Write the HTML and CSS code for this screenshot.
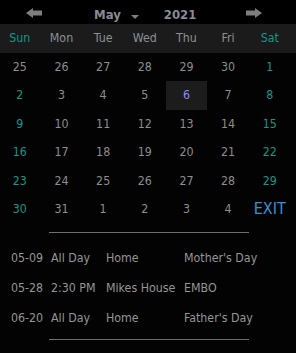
FILE: index.html
```html
<!DOCTYPE html>
<html>
<head>
<meta charset="utf-8">
<link rel="stylesheet" href="styles.css">
</head>
<body>
<div class="app">
  <div class="header">
    <svg class="arrow arrow-left" width="16" height="10" viewBox="0 0 16 10"><path d="M0 5 L7 0 L7 2.5 L16 2.5 L16 7.5 L7 7.5 L7 10 Z" fill="#7e7e7e"/></svg>
    <span class="month">May</span>
    <svg class="caret" width="8" height="4" viewBox="0 0 8 4"><path d="M0 0 L8 0 L4 4 Z" fill="#7e7e7e"/></svg>
    <span class="year">2021</span>
    <svg class="arrow arrow-right" width="16" height="10" viewBox="0 0 16 10"><path d="M16 5 L9 0 L9 2.5 L0 2.5 L0 7.5 L9 7.5 L9 10 Z" fill="#7e7e7e"/></svg>
  </div>
  <div class="weekdays">
    <div class="wd weekend">Sun</div>
    <div class="wd">Mon</div>
    <div class="wd">Tue</div>
    <div class="wd">Wed</div>
    <div class="wd">Thu</div>
    <div class="wd">Fri</div>
    <div class="wd weekend">Sat</div>
  </div>
  <div class="days">
    <div class="d">25</div><div class="d">26</div><div class="d">27</div><div class="d">28</div><div class="d">29</div><div class="d">30</div><div class="d weekend">1</div>
    <div class="d weekend">2</div><div class="d">3</div><div class="d">4</div><div class="d">5</div><div class="d today">6</div><div class="d">7</div><div class="d weekend">8</div>
    <div class="d weekend">9</div><div class="d">10</div><div class="d">11</div><div class="d">12</div><div class="d">13</div><div class="d">14</div><div class="d weekend">15</div>
    <div class="d weekend">16</div><div class="d">17</div><div class="d">18</div><div class="d">19</div><div class="d">20</div><div class="d">21</div><div class="d weekend">22</div>
    <div class="d weekend">23</div><div class="d">24</div><div class="d">25</div><div class="d">26</div><div class="d">27</div><div class="d">28</div><div class="d weekend">29</div>
    <div class="d weekend">30</div><div class="d">31</div><div class="d">1</div><div class="d">2</div><div class="d">3</div><div class="d">4</div><div class="d exit">EXIT</div>
  </div>
  <div class="rule"></div>
  <div class="events">
    <div class="ev"><span>05-09</span><span>All Day</span><span>Home</span><span>Mother's Day</span></div>
    <div class="ev"><span>05-28</span><span>2:30 PM</span><span>Mikes House</span><span>EMBO</span></div>
    <div class="ev"><span>06-20</span><span>All Day</span><span>Home</span><span>Father's Day</span></div>
  </div>
  <div class="rule rule-bottom"></div>
</div>
</body>
</html>
```

FILE: styles.css
```css
html, body {
  margin: 0;
  padding: 0;
  background: #030303;
}
.app {
  width: 296px;
  height: 353px;
  background: #030303;
  font-family: "DejaVu Sans Condensed", "DejaVu Sans", sans-serif;
  font-size: 12.3px;
  color: #8e8e8e;
  overflow: hidden;
}
.header {
  height: 24px;
  display: flex;
  align-items: center;
  background: #000;
}
.arrow {
  display: block;
}
.arrow-left {
  margin-left: 26px;
  margin-top: 2px;
}
.month, .year {
  font-weight: bold;
  font-size: 13px;
  color: #868c97;
  line-height: 24px;
  margin-top: 5px;
}
.month {
  margin-left: 52px;
}
.caret {
  display: block;
  margin-left: 10px;
  margin-top: 9px;
}
.year {
  margin-left: 25px;
}
.arrow-right {
  margin-left: 50px;
  margin-top: 2px;
}
.weekdays {
  height: 29px;
  background: #1b1b1b;
  display: grid;
  grid-template-columns: repeat(7, 41.67px);
  margin-left: -1px;
  width: 297px;
}
.wd {
  text-align: center;
  line-height: 29px;
  color: #8a9097;
}
.weekend {
  color: #179488;
}
.days {
  display: grid;
  grid-template-columns: repeat(7, 41.67px);
  grid-auto-rows: 28.4px;
  margin-left: -1px;
}
.d {
  text-align: center;
  line-height: 28.4px;
}
.d.weekend {
  color: #19968a;
}
.d.today {
  background: #1c1c1c;
  color: #8a8cff;
}
.d.exit {
  color: #3b8fd6;
  font-size: 16px;
}
.rule {
  width: 200px;
  height: 1px;
  background: #6e6e6e;
  margin: 9px 0 0 49px;
}
.events {
  padding-top: 10px;
}
.ev {
  display: grid;
  grid-template-columns: 40px 55px 78px auto;
  padding-left: 11px;
  height: 30px;
  line-height: 30px;
  color: #959595;
  white-space: nowrap;
}
.rule-bottom {
  margin-top: 6px;
}
```
